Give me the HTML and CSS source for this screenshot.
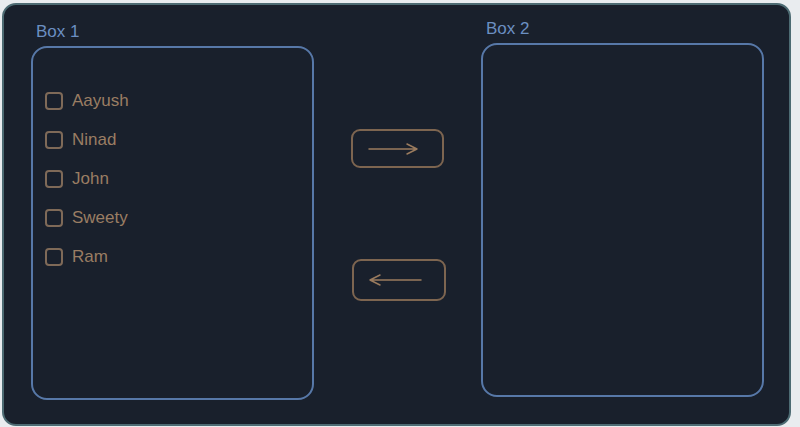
FILE: index.html
```html
<!DOCTYPE html>
<html>
<head>
    <meta charset="UTF-8">
    <title>Transfer List</title>
    <link rel="stylesheet" href="styles.css">
</head>
<body>
    <div class="container">
        <div class="column">
            <div class="label">Box 1</div>
            <div class="box box-left">
                <label class="item"><input type="checkbox"><span>Aayush</span></label>
                <label class="item"><input type="checkbox"><span>Ninad</span></label>
                <label class="item"><input type="checkbox"><span>John</span></label>
                <label class="item"><input type="checkbox"><span>Sweety</span></label>
                <label class="item"><input type="checkbox"><span>Ram</span></label>
            </div>
        </div>

        <div class="controls">
            <button class="move move-right">
                <svg width="52" height="14" viewBox="0 0 52 14">
                    <path d="M1 7H49M39 2L49 7L39 12" fill="none" stroke="#9a7b5e" stroke-width="1.5" stroke-linecap="round" stroke-linejoin="round"/>
                </svg>
            </button>
            <button class="move move-left">
                <svg width="54" height="14" viewBox="0 0 54 14">
                    <path d="M53 7H2M12 2L2 7L12 12" fill="none" stroke="#9a7b5e" stroke-width="1.5" stroke-linecap="round" stroke-linejoin="round"/>
                </svg>
            </button>
        </div>

        <div class="column column-right">
            <div class="label">Box 2</div>
            <div class="box box-right"></div>
        </div>
    </div>
</body>
</html>
```

FILE: styles.css
```css
* {
    box-sizing: border-box;
}

body {
    margin: 0;
    background-color: #e9ecef;
    font-family: "Liberation Sans", Arial, Helvetica, sans-serif;
}

.container {
    width: 789px;
    height: 423px;
    margin: 3px 0 0 2px;
    background-color: #19202c;
    border: 2px solid #4d6b73;
    border-radius: 14px;
    display: flex;
    padding: 17px 0 0 27px;
}

.column {
    display: flex;
    flex-direction: column;
    width: 283px;
}

.column-right {
    margin-top: -3px;
}

.label {
    color: #6b8fc2;
    font-size: 17px;
    line-height: 20px;
    padding-left: 5px;
    margin-bottom: 4px;
}

.box {
    height: 354px;
    border: 2px solid #5778a8;
    border-radius: 16px;
}

.box-left {
    display: flex;
    flex-direction: column;
    padding: 33px 0 0 12px;
}

.item {
    display: flex;
    align-items: center;
    gap: 9px;
    height: 39px;
    color: #9a7d63;
    font-size: 17px;
    cursor: pointer;
}

.item input {
    appearance: none;
    margin: 0;
    width: 18px;
    height: 18px;
    border: 2px solid #7f6a58;
    border-radius: 4px;
    background: transparent;
}

.controls {
    width: 167px;
    display: flex;
    flex-direction: column;
    align-items: center;
    padding-top: 107px;
    gap: 91px;
}

.move {
    display: flex;
    align-items: center;
    justify-content: center;
    width: 93px;
    height: 39px;
    background: transparent;
    border: 2px solid #7d6550;
    border-radius: 9px;
    cursor: pointer;
    padding: 0 8px 0 0;
}

.move-left {
    width: 94px;
    height: 42px;
    margin-left: 3px;
}
```
